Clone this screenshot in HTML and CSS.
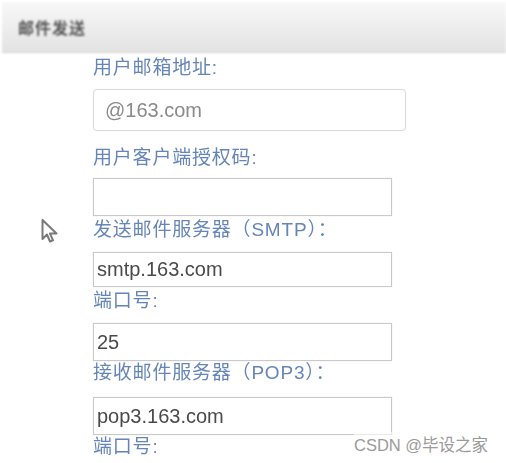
FILE: index.html
```html
<!DOCTYPE html>
<html lang="zh-CN">
<head>
<meta charset="utf-8">
<title>邮件发送</title>
<link rel="stylesheet" href="styles.css">
</head>
<body>
<div class="panel">
  <div class="panel-head">邮件发送</div>
  <div class="form">
    <div class="label l1">用户邮箱地址:</div>
    <div class="field f1 hint">@163.com</div>
    <div class="label l2">用户客户端授权码:</div>
    <div class="field f2"></div>
    <div class="label l3">发送邮件服务器（SMTP）：</div>
    <div class="field f3">smtp.163.com</div>
    <div class="label l4">端口号:</div>
    <div class="field f4">25</div>
    <div class="label l5">接收邮件服务器（POP3）：</div>
    <div class="field f5">pop3.163.com</div>
    <div class="label l6">端口号:</div>
  </div>
  <svg class="cursor" width="20" height="26" viewBox="0 0 20 26" aria-hidden="true">
    <path d="M2.5 2 L2.5 21 L7 16.5 L10 23.5 L13 22.3 L10 15.5 L16.5 15.5 Z" fill="#fff" stroke="#7a7a7a" stroke-width="2" stroke-linejoin="round"/>
  </svg>
  <div class="watermark">CSDN @毕设之家</div>
</div>
</body>
</html>
```
FILE: styles.css
```css
html, body {
  margin: 0;
  padding: 0;
  background: #fff;
}
.panel {
  position: relative;
  width: 506px;
  height: 463px;
  overflow: hidden;
  background: #fff;
  font-family: "Liberation Sans", "Noto Sans CJK SC", sans-serif;
}
.panel-head {
  height: 50px;
  margin: 2px 0 0 2px;
  padding-left: 16px;
  display: flex;
  align-items: center;
  background: linear-gradient(#f8f8f8, #e3e3e3);
  border-bottom: 1px solid #d3d3d3;
  font-family: "Noto Sans CJK SC", sans-serif;
  font-weight: bold;
  font-size: 16px;
  color: #555;
  letter-spacing: 1px;
  filter: blur(0.8px);
}
.form {
  padding-left: 93px;
  display: flex;
  flex-direction: column;
  align-items: flex-start;
  filter: blur(0.5px);
}
.label {
  font-family: "Liberation Sans", "Noto Sans CJK SC", sans-serif;
  font-size: 19px;
  letter-spacing: 0.8px;
  line-height: 20px;
  height: 20px;
  color: #6585b8;
}
.field {
  box-sizing: border-box;
  width: 299px;
  border: 1px solid #c9c9c9;
  display: flex;
  align-items: center;
  padding-left: 3px;
  font-size: 20px;
  color: #4a4a4a;
  box-shadow: 0 0 1px #ddd;
}
.hint {
  color: #8a8a8a;
  padding-left: 11px;
}
.l1 { margin-top: 5px; }
.f1 { margin-top: 11px; height: 42px; width: 313px; border-radius: 4px; border-color: #dadada; }
.l2 { margin-top: 17px; }
.f2 { margin-top: 10px; height: 38px; }
.l3 { margin-top: 4px; }
.f3 { margin-top: 12px; height: 35px; }
.l4 { margin-top: 4px; }
.f4 { margin-top: 12px; height: 38px; }
.l5 { margin-top: 2px; }
.f5 { margin-top: 14px; height: 38px; }
.l6 { margin-top: 2px; }
.cursor {
  position: absolute;
  left: 40px;
  top: 218px;
  filter: blur(0.6px);
}
.watermark {
  position: absolute;
  left: 354px;
  top: 432px;
  font-family: "Liberation Sans", "Noto Sans CJK SC", sans-serif;
  font-size: 16.5px;
  color: #9a9a9a;
  background: rgba(255,255,255,0.6);
}
```
